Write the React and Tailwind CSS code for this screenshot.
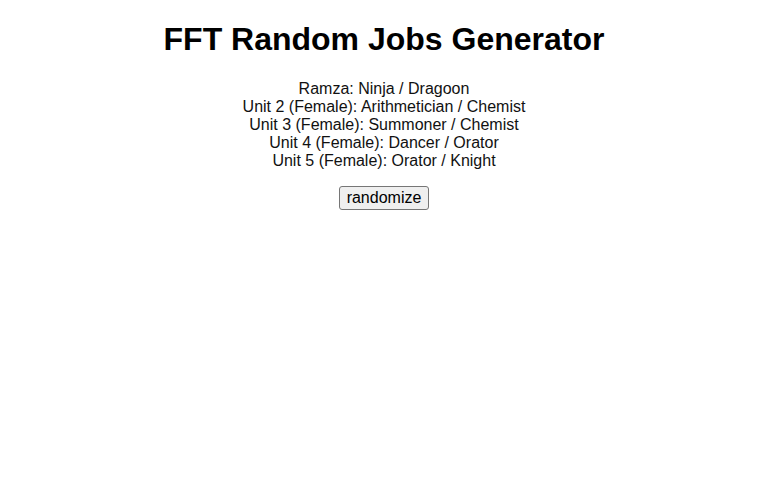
import React, { useState } from 'react';

const JOBS = ['Squire', 'Chemist', 'Knight', 'Archer', 'Monk', 'Priest', 'Wizard', 'Time Mage', 'Summoner', 'Thief', 'Orator', 'Mystic', 'Geomancer', 'Dragoon', 'Samurai', 'Ninja', 'Arithmetician', 'Dancer'];

const initial = [
    { name: 'Ramza', jobs: ['Ninja', 'Dragoon'] },
    { name: 'Unit 2 (Female)', jobs: ['Arithmetician', 'Chemist'] },
    { name: 'Unit 3 (Female)', jobs: ['Summoner', 'Chemist'] },
    { name: 'Unit 4 (Female)', jobs: ['Dancer', 'Orator'] },
    { name: 'Unit 5 (Female)', jobs: ['Orator', 'Knight'] },
];

const pick = () => JOBS[Math.floor(Math.random() * JOBS.length)];

const App = () => {
    const [units, setUnits] = useState(initial);

    const randomize = () => {
        setUnits(units.map(u => ({ ...u, jobs: [pick(), pick()] })));
    };

    return (
        <div className="text-center text-black bg-white min-h-[480px]" style={{ fontFamily: '"Liberation Sans", Arial, sans-serif' }}>
            <h1 className="text-[32px] font-bold leading-[37px] pt-[21px] pb-[22px]">FFT Random Jobs Generator</h1>
            <div className="text-base leading-[18px] text-[#111]">
                {units.map((u, i) => (
                    <div key={i}>{u.name}: {u.jobs[0]} / {u.jobs[1]}</div>
                ))}
            </div>
            <div className="mt-4">
                <button
                    className="text-base leading-[18px] px-[7px] py-[2px] border border-[#767676] rounded-[3px] bg-[#efefef] hover:bg-[#e5e5e5]"
                    onClick={randomize}
                >
                    randomize
                </button>
            </div>
        </div>
    );
};

export default App;
